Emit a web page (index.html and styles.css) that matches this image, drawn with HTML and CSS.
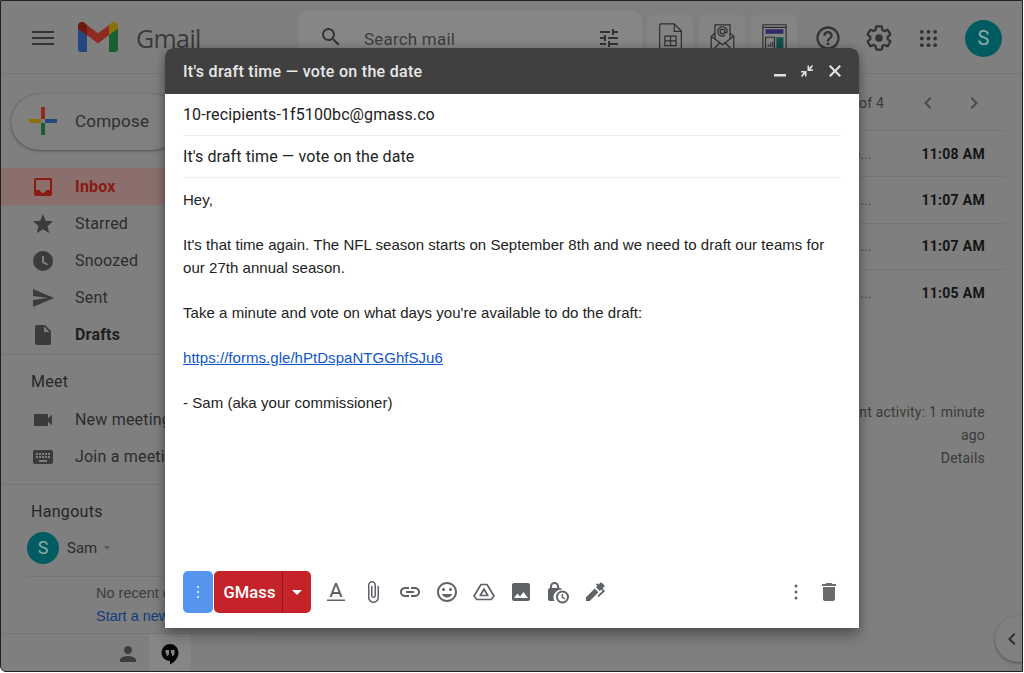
FILE: index.html
```html
<!DOCTYPE html>
<html lang="en">
<head>
<meta charset="utf-8">
<title>Gmail</title>
<link rel="stylesheet" href="styles.css">
</head>
<body>
<div class="app">
  <header class="topbar">
    <svg class="menu-icon" viewBox="0 0 22 14"><path d="M0 0h22v2H0zM0 6h22v2H0zM0 12h22v2H0z"/></svg>
    <svg class="logo" viewBox="0 0 40 30">
      <path fill="#24477f" d="M0 4v23a3 3 0 0 0 3 3h6V13z"/>
      <path fill="#1a5f30" d="M31 13v17h6a3 3 0 0 0 3-3V4z"/>
      <path fill="#8a7108" d="M31 3v10l9-6.500V4c0-3.500-3.500-5.500-6.500-3.300z"/>
      <path fill="#8f2a22" d="M9 13V3l11 8.300L31 3v10L20 21.500z"/>
      <path fill="#6e1a14" d="M0 4v3l9 6.500V3L6.500.7C3.500-1.500 0 .5 0 4z"/>
    </svg>
    <span class="brand">Gmail</span>
    <div class="search">
      <svg class="search-icon" viewBox="0 0 24 24"><path d="M15.500 14h-.79l-.28-.27A6.470 6.470 0 0 0 16 9.500 6.500 6.500 0 1 0 9.500 16c1.610 0 3.090-.59 4.230-1.570l.27.28v.79l5 4.990L20.490 19l-4.990-5zm-6 0C7.010 14 5 11.990 5 9.500S7.010 5 9.500 5 14 7.010 14 9.500 11.990 14 9.500 14z"/></svg>
      <span class="search-text">Search mail</span>
      <svg class="tune-icon" viewBox="0 0 24 24"><path d="M3 17v2h6v-2H3zM3 5v2h10V5H3zm10 16v-2h8v-2h-8v-2h-2v6h2zM7 9v2H3v2h4v2h2V9H7zm14 4v-2H11v2h10zm-6-4h2V7h4V5h-4V3h-2v6z"/></svg>
    </div>
    <div class="addons">
      <div class="addon"><svg viewBox="0 0 26 34"><path class="line" d="M1.500 2.500a1.500 1.500 0 0 1 1.500-1.500h14l7.500 7.500v22a1.500 1.500 0 0 1-1.500 1.500H3a1.500 1.500 0 0 1-1.500-1.500z"/><path class="line" d="M17 1v8h7.500M7 14h12v10H7zM7 19h12M13 14v10"/></svg></div>
      <div class="addon"><svg viewBox="0 0 26 34"><path class="line" d="M1 14l4-3M25 14l-4-3M1 14v17h24V14M5 17V2h16v15M1 14l12 9 12-9M1 31l9-10M25 31l-9-10"/><circle class="line" cx="13" cy="9" r="2.500"/><path class="line" d="M15.500 9c0 2 2.500 2 2.500 0a5 5 0 1 0-2 4"/></svg></div>
      <div class="addon"><svg viewBox="0 0 28 34"><path class="line" d="M1 1h26v32H1zM1 4h26"/><path fill="#2f2a66" d="M4 6h20v5H4z"/><path fill="#10504a" d="M16 15h8v14h-8z"/><path class="line" d="M4 15h10v14H4zM7 26v-3M9.500 26v-5M12 26v-6"/></svg></div>
    </div>
    <div class="top-actions">
      <svg class="top-icon" viewBox="0 0 24 24"><path d="M11 18h2v-2h-2v2zm1-16C6.480 2 2 6.480 2 12s4.480 10 10 10 10-4.480 10-10S17.520 2 12 2zm0 18c-4.410 0-8-3.590-8-8s3.590-8 8-8 8 3.590 8 8-3.590 8-8 8zm0-14c-2.210 0-4 1.790-4 4h2c0-1.100.9-2 2-2s2 .9 2 2c0 2-3 1.750-3 5h2c0-2.250 3-2.500 3-5 0-2.210-1.790-4-4-4z"/></svg>
      <svg class="top-icon" viewBox="0 0 24 24"><path class="gear" d="M19.430 12.980c.04-.32.07-.64.07-.98s-.03-.66-.07-.98l2.110-1.650c.19-.15.24-.42.12-.64l-2-3.460c-.12-.22-.39-.3-.61-.22l-2.490 1c-.52-.4-1.080-.73-1.690-.98l-.38-2.650A.488.488 0 0 0 14 2h-4c-.25 0-.46.18-.49.42l-.38 2.650c-.61.25-1.170.59-1.690.98l-2.490-1c-.23-.09-.49 0-.61.22l-2 3.460c-.13.22-.07.49.12.64l2.110 1.650c-.04.32-.07.65-.07.98s.03.66.07.98l-2.110 1.650c-.19.15-.24.42-.12.64l2 3.460c.12.22.39.3.61.22l2.490-1c.52.4 1.080.73 1.690.98l.38 2.650c.03.24.24.42.49.42h4c.25 0 .46-.18.49-.42l.38-2.650c.61-.25 1.170-.59 1.690-.98l2.490 1c.23.09.49 0 .61-.22l2-3.460c.12-.22.07-.49-.12-.64l-2.110-1.650z"/><circle cx="12" cy="12" r="3.200"/></svg>
      <svg class="grid-icon" viewBox="0 0 20 20"><circle cx="3" cy="3" r="2"/><circle cx="10" cy="3" r="2"/><circle cx="17" cy="3" r="2"/><circle cx="3" cy="10" r="2"/><circle cx="10" cy="10" r="2"/><circle cx="17" cy="10" r="2"/><circle cx="3" cy="17" r="2"/><circle cx="10" cy="17" r="2"/><circle cx="17" cy="17" r="2"/></svg>
      <span class="avatar avatar-large">S</span>
    </div>
  </header>

  <div class="columns">
    <aside class="sidebar">
      <div class="compose-btn">
        <svg class="plus" viewBox="0 0 28 28"><path fill="#8f2a22" d="M12 0h4v12h-4z"/><path fill="#24477f" d="M16 12h12v4H16z"/><path fill="#1a5f30" d="M12 16h4v12h-4z"/><path fill="#8a7108" d="M0 12h12v4H0z"/></svg>
        <span>Compose</span>
      </div>
      <nav class="nav">
        <div class="nav-item nav-active"><svg viewBox="0 0 24 24"><path d="M19 3H5c-1.100 0-2 .9-2 2v14c0 1.100.9 2 2 2h14c1.100 0 2-.9 2-2V5c0-1.100-.9-2-2-2zm0 12h-4c0 1.660-1.350 3-3 3s-3-1.340-3-3H4.990V5H19v10z"/></svg><span>Inbox</span></div>
        <div class="nav-item"><svg viewBox="0 0 24 24"><path d="M12 17.270L18.180 21l-1.640-7.030L22 9.240l-7.190-.61L12 2 9.190 8.630 2 9.240l5.460 4.730L5.820 21z"/></svg><span>Starred</span></div>
        <div class="nav-item"><svg viewBox="0 0 24 24"><path fill-rule="evenodd" d="M12 2a10 10 0 1 0 0 20 10 10 0 0 0 0-20zm-1 5h2v5.500l4 2.400-1 1.500-5-3z"/></svg><span>Snoozed</span></div>
        <div class="nav-item"><svg viewBox="0 0 24 24"><path d="M2.010 21L23 12 2.010 3 2 10l15 2-15 2z"/></svg><span>Sent</span></div>
        <div class="nav-item nav-bold"><svg viewBox="0 0 24 24"><path d="M6 2c-1.100 0-1.990.9-1.990 2L4 20c0 1.100.89 2 1.990 2H18c1.100 0 2-.9 2-2V8l-6-6H6zm7 7V3.500L18.500 9H13z"/></svg><span>Drafts</span></div>
      </nav>
      <section class="meet">
        <h2 class="side-title">Meet</h2>
        <div class="nav-item"><svg viewBox="0 0 24 24"><path d="M17 10.500V7c0-.55-.45-1-1-1H4c-.55 0-1 .45-1 1v10c0 .55.45 1 1 1h12c.55 0 1-.45 1-1v-3.500l4 4v-11l-4 4z"/></svg><span>New meeting</span></div>
        <div class="nav-item"><svg viewBox="0 0 24 24"><path d="M20 5H4c-1.100 0-1.990.9-1.990 2L2 17c0 1.100.9 2 2 2h16c1.100 0 2-.9 2-2V7c0-1.100-.9-2-2-2zm-9 3h2v2h-2V8zm0 3h2v2h-2v-2zM8 8h2v2H8V8zm0 3h2v2H8v-2zm-1 2H5v-2h2v2zm0-3H5V8h2v2zm9 7H8v-2h8v2zm0-4h-2v-2h2v2zm0-3h-2V8h2v2zm3 3h-2v-2h2v2zm0-3h-2V8h2v2z"/></svg><span>Join a meeting</span></div>
      </section>
      <section class="hangouts">
        <h2 class="side-title">Hangouts</h2>
        <div class="hang-user"><span class="avatar avatar-small">S</span><span>Sam</span><i class="caret"></i></div>
        <div class="hang-empty">
          <div>No recent chats</div>
          <div class="hang-link">Start a new one</div>
        </div>
      </section>
      <div class="hang-tabs">
        <div class="hang-tab"><svg viewBox="0 0 24 24"><path d="M12 12c2.210 0 4-1.790 4-4s-1.790-4-4-4-4 1.790-4 4 1.790 4 4 4zm0 2c-2.670 0-8 1.340-8 4v2h16v-2c0-2.660-5.330-4-8-4z"/></svg></div>
        <div class="hang-tab hang-tab-on"><svg viewBox="0 0 24 24"><path fill-rule="evenodd" d="M12 2a8.500 8.500 0 0 0-8.500 8.500c0 4.700 3.800 8.500 8.500 8.500v3.500c4.500-2.200 8.500-6.500 8.500-12A8.500 8.500 0 0 0 12 2zM7.500 8H11v3.500c0 1.500-1 2.500-2.500 2.500v-2.500h-1zm5.500 0h3.500v3.500c0 1.500-1 2.500-2.500 2.500v-2.500h-1z"/></svg></div>
      </div>
    </aside>

    <main class="main">
      <div class="pager">
        <span>1–4 of 4</span>
        <svg viewBox="0 0 24 24"><path d="M15.410 7.410L14 6l-6 6 6 6 1.410-1.410L10.830 12z"/></svg>
        <svg viewBox="0 0 24 24"><path d="M8.590 16.590L10 18l6-6-6-6-1.410 1.410L13.170 12z"/></svg>
      </div>
      <div class="row"><span class="snip">o...</span><span class="time">11:08 AM</span></div>
      <div class="row"><span class="snip">...</span><span class="time">11:07 AM</span></div>
      <div class="row"><span class="snip">...</span><span class="time">11:07 AM</span></div>
      <div class="row"><span class="snip">...</span><span class="time">11:05 AM</span></div>
      <div class="activity">
        <div>Last account activity: 1 minute</div>
        <div>ago</div>
        <div>Details</div>
      </div>
    </main>
  </div>

  <div class="panel-toggle"><svg viewBox="0 0 24 24"><path d="M15.410 7.410L14 6l-6 6 6 6 1.410-1.410L10.830 12z"/></svg></div>

  <section class="compose">
    <div class="compose-head">
      <span class="compose-title">It's draft time — vote on the date</span>
      <svg class="head-icon" viewBox="0 0 16 16"><path d="M2 11h12v2.500H2z"/></svg>
      <svg class="head-icon" viewBox="0 0 16 16"><path d="M14 3l-1-1-3 3V2.500H8.500V8H14V6.500h-2.500zM2 13l1 1 3-3v2.500h1.500V8H2v1.500h2.500z"/></svg>
      <svg class="head-icon" viewBox="0 0 14 14"><path d="M14 1.800L12.200 0 7 5.200 1.800 0 0 1.800 5.200 7 0 12.200 1.800 14 7 8.800 12.200 14 14 12.200 8.800 7z"/></svg>
    </div>
    <div class="compose-body">
      <div class="field">10-recipients-1f5100bc@gmass.co</div>
      <div class="field">It's draft time — vote on the date</div>
      <div class="message">
        <p>Hey,</p>
        <p>It's that time again. The NFL season starts on September 8th and we need to draft our teams for our 27th annual season.</p>
        <p>Take a minute and vote on what days you're available to do the draft:</p>
        <p><a class="msg-link" href="#">https://forms.gle/hPtDspaNTGGhfSJu6</a></p>
        <p>- Sam (aka your commissioner)</p>
      </div>
      <div class="toolbar">
        <div class="btn-dots"><svg viewBox="0 0 4 14"><circle cx="2" cy="2" r="1"/><circle cx="2" cy="7" r="1"/><circle cx="2" cy="12" r="1"/></svg></div>
        <div class="btn-gmass"><span class="gmass-label">GMass</span><span class="gmass-drop"><i></i></span></div>
        <div class="tools">
          <svg viewBox="0 0 24 24"><path d="M11 3L5.500 17h2.250l1.120-3h6.250l1.120 3h2.250L13 3h-2zm-1.380 9L12 5.670 14.380 12H9.620zM3 19.500h18V21H3z"/></svg>
          <svg viewBox="0 0 24 24"><path d="M16.500 6v11.500c0 2.210-1.790 4-4 4s-4-1.790-4-4V5c0-1.380 1.120-2.500 2.500-2.500s2.500 1.120 2.500 2.500v10.500c0 .55-.45 1-1 1s-1-.45-1-1V6H10v9.500c0 1.380 1.120 2.500 2.500 2.500s2.500-1.120 2.500-2.500V5c0-2.210-1.790-4-4-4S7 2.790 7 5v12.500c0 3.040 2.460 5.500 5.500 5.500s5.500-2.460 5.500-5.500V6h-1.500z"/></svg>
          <svg viewBox="0 0 24 24"><path d="M3.900 12c0-1.710 1.390-3.100 3.100-3.100h4V7H7c-2.760 0-5 2.240-5 5s2.240 5 5 5h4v-1.900H7c-1.710 0-3.100-1.390-3.100-3.100zM8 13h8v-2H8v2zm9-6h-4v1.900h4c1.710 0 3.100 1.390 3.100 3.100s-1.390 3.100-3.100 3.100h-4V17h4c2.760 0 5-2.240 5-5s-2.240-5-5-5z"/></svg>
          <svg viewBox="0 0 24 24"><path d="M11.990 2C6.470 2 2 6.480 2 12s4.470 10 9.990 10C17.520 22 22 17.520 22 12S17.520 2 11.990 2zM12 20c-4.420 0-8-3.580-8-8s3.580-8 8-8 8 3.580 8 8-3.580 8-8 8zm3.500-9c.83 0 1.500-.67 1.500-1.500S16.330 8 15.500 8 14 8.670 14 9.500s.67 1.500 1.500 1.500zm-7 0c.83 0 1.500-.67 1.500-1.500S9.330 8 8.500 8 7 8.670 7 9.500 7.670 11 8.500 11zm3.500 6.500c2.330 0 4.310-1.460 5.110-3.500H6.890c.8 2.040 2.780 3.500 5.110 3.500z"/></svg>
          <svg viewBox="0 0 24 24"><path fill="none" stroke-width="1.700" stroke-linejoin="round" class="stroke" d="M9 4.500h6l7 11.500-3 3.500H5L2 16zM12 9l-3.800 6.500h7.600z"/></svg>
          <svg viewBox="0 0 24 24"><path d="M21 19V5c0-1.100-.9-2-2-2H5c-1.100 0-2 .9-2 2v14c0 1.100.9 2 2 2h14c1.100 0 2-.9 2-2zM8.500 13.500l2.500 3.010L14.500 12l4.500 6H5l3.500-4.500z"/></svg>
          <svg viewBox="0 0 24 24"><path d="M4 8V6.500a4.500 4.500 0 0 1 9 0V8h1a2 2 0 0 1 2 1.500c-4.500 0-8.500 3.500-8.500 8 0 1.200.3 2.500 1 3.500H4a2 2 0 0 1-2-2v-9a2 2 0 0 1 2-2zm2 0h5V6.500a2.500 2.500 0 0 0-5 0z"/><path fill-rule="evenodd" d="M16.500 10.500a6.500 6.500 0 1 0 0 13 6.500 6.500 0 0 0 0-13zm0 2a4.500 4.500 0 1 1 0 9 4.500 4.500 0 0 1 0-9zM15.700 14v3.800l3 1.800.8-1.200-2.400-1.400V14z"/></svg>
          <svg viewBox="0 0 24 24"><path d="M3 17.250V21h3.750L15.500 12.250l-3.750-3.750zM13 7.250l3.750 3.750 1.500-1.500 1.250 1.250-5 5 1.250 1.250L22 11l-2.500-2.500 1.800-1.800a1 1 0 0 0 0-1.400l-2.600-2.600a1 1 0 0 0-1.400 0l-1.800 1.800-1.250-1.250-1.250 1.250 1.250 1.250z"/></svg>
        </div>
        <svg class="tool-more" viewBox="0 0 4 16"><circle cx="2" cy="2" r="1.500"/><circle cx="2" cy="8" r="1.500"/><circle cx="2" cy="14" r="1.500"/></svg>
        <svg class="tool-trash" viewBox="0 0 24 24"><path d="M6 19c0 1.100.9 2 2 2h8c1.100 0 2-.9 2-2V7H6v12zM19 4h-3.500l-1-1h-5l-1 1H5v2h14V4z"/></svg>
      </div>
    </div>
  </section>
</div>
</body>
</html>
```

FILE: styles.css
```css
* { box-sizing: border-box; }
html, body { margin: 0; padding: 0; background: #fff; }
.app {
  position: relative;
  width: 1023px;
  height: 672px;
  background: #7f7f7f;
  border: 1px solid #222;
  border-bottom-left-radius: 6px;
  overflow: hidden;
  display: flex;
  flex-direction: column;
  font-family: Roboto, "Liberation Sans", sans-serif;
  color: #2b2b2b;
}

/* Top bar */
.topbar {
  height: 73px;
  flex: none;
  display: flex;
  align-items: center;
  border-bottom: 1px solid #767676;
  padding: 2px 0 0 31px;
}
.menu-icon { width: 22px; height: 14px; fill: #333; flex: none; }
.logo { width: 40px; height: 30px; margin: -2px 0 0 24px; flex: none; }
.brand { font-family: "Open Sans", Roboto, sans-serif; font-size: 25px; color: #3a3a3a; margin-left: 18px; width: 163px; flex: none; letter-spacing: -.6px; }
.search {
  width: 343px;
  height: 56px;
  flex: none;
  background: #868686;
  border-radius: 10px;
  display: flex;
  align-items: center;
  padding-left: 20px;
}
.search-icon { width: 24px; height: 24px; fill: #333; flex: none; margin-top: -3px; }
.search-text { font-size: 17px; color: #3c3c3c; margin: 2px 0 0 21px; flex: 1; letter-spacing: .2px; }
.tune-icon { width: 24px; height: 24px; fill: #333; margin-right: 21px; flex: none; }
.addons { display: flex; gap: 6px; margin-left: 5px; flex: none; }
.addon {
  width: 46px;
  height: 46px;
  background: #848484;
  border-radius: 6px;
  display: flex;
  align-items: flex-start;
  justify-content: center;
  padding-top: 8px;
}
.addon svg { width: 25px; height: 32px; }
.line { fill: none; stroke: #2e2e2e; stroke-width: 1.300; }
.top-actions { display: flex; align-items: center; margin-left: 17px; flex: none; }
.top-icon { width: 28px; height: 28px; fill: #333; margin-right: 23px; flex: none; }
.gear { fill: none; stroke: #333; stroke-width: 1.900; }
.grid-icon { width: 19px; height: 19px; fill: #333; margin-left: 3px; flex: none; }
.avatar {
  display: flex;
  align-items: center;
  justify-content: center;
  border-radius: 50%;
  background: #005c60;
  color: #8fa9aa;
  flex: none;
}
.avatar-large { width: 37px; height: 37px; font-size: 20px; margin-left: 27px; }
.avatar-small { width: 32px; height: 32px; font-size: 18px; }

/* Columns */
.columns { flex: 1; display: flex; min-height: 0; }
.sidebar { width: 256px; flex: none; display: flex; flex-direction: column; position: relative; }
.compose-btn {
  margin: 20px 0 0 10px;
  width: 170px;
  height: 56px;
  border-radius: 28px;
  background: #808080;
  box-shadow: 0 1px 3px rgba(0,0,0,.35), 0 0 1px rgba(0,0,0,.3);
  display: flex;
  align-items: center;
  padding: 0 0 2px 18px;
  font-size: 17px;
  letter-spacing: .2px;
  color: #2e2e2e;
  flex: none;
}
.plus { width: 28px; height: 28px; margin-right: 18px; flex: none; }
.nav { margin-top: 18px; border-bottom: 1px solid #767676; padding-bottom: 1px; flex: none; }
.nav-item {
  height: 37px;
  display: flex;
  align-items: center;
  padding-left: 30px;
  font-size: 16px;
  letter-spacing: .2px;
  color: #2c2c2c;
  white-space: nowrap;
  flex: none;
}
.nav-item svg { width: 24px; height: 24px; fill: #3b3b3b; margin-right: 20px; flex: none; }
.nav-active { background: #8a6f6d; color: #8a1a14; font-weight: 700; }
.nav-active svg { fill: #8a1a14; }
.nav-bold { font-weight: 700; color: #1e1e1e; }
.side-title { font-size: 16px; font-weight: 400; letter-spacing: .3px; color: #262626; margin: 0; padding-left: 30px; }
.meet { height: 130px; padding-top: 17px; border-bottom: 1px solid #767676; flex: none; }
.meet .side-title { height: 29px; }
.hangouts { flex: 1; padding-top: 17px; }
.hangouts .side-title { height: 29px; }
.hang-user {
  height: 46px;
  margin-left: 26px;
  display: flex;
  align-items: center;
  gap: 7px;
  font-size: 15px;
  border-bottom: 1px solid #767676;
  padding-bottom: 13px;
  padding-top: 1px;
}
.hang-user span:nth-child(2) { margin-left: 1px; }
.caret { width: 0; height: 0; border: 3.500px solid transparent; border-top: 4px solid #5a5a5a; border-bottom: 0; }
.hang-empty { padding: 5px 0 0 95px; font-family: "Liberation Sans", sans-serif; font-size: 14.500px; line-height: 23px; color: #3c3c3c; white-space: nowrap; }
.hang-link { color: #123a80; }
.hang-tabs {
  height: 38px;
  flex: none;
  border-top: 1px solid #767676;
  display: flex;
  justify-content: flex-start;
  padding-left: 106px;
}
.hang-tab { width: 42px; display: flex; align-items: center; justify-content: center; padding-top: 2px; }
.hang-tab svg { width: 24px; height: 24px; fill: #3d3d3d; }
.hang-tab-on { background: #868686; }
.hang-tab-on svg { fill: #050505; }

/* Main list */
.main { flex: 1; padding-right: 17px; min-width: 0; }
.pager {
  height: 56px;
  display: flex;
  align-items: center;
  justify-content: flex-end;
  font-size: 14px;
  color: #3a3a3a;
  letter-spacing: .2px;
  padding: 2px 19px 0 0;
}
.pager span { margin-right: 32px; }
.pager svg { width: 24px; height: 24px; fill: #4a4a4a; margin-right: 22px; }
.pager svg:last-child { margin-right: 0; }
.row {
  height: 46.300px;
  border-top: 1px solid #767676;
  display: flex;
  align-items: center;
  font-size: 14px;
  padding-right: 20px;
}
.snip { margin-left: auto; margin-right: 50px; color: #4a4a4a; }
.time { font-weight: 700; color: #141414; letter-spacing: .3px; }
.row:last-of-type { border-bottom: 1px solid #767676; }
.activity { margin-top: 86px; padding-right: 20px; text-align: right; font-size: 14px; line-height: 23px; letter-spacing: .2px; color: #3a3a3a; }

.panel-toggle {
  position: absolute;
  left: 994px;
  top: 615px;
  width: 46px;
  height: 46px;
  border-radius: 50%;
  background: #808080;
  box-shadow: 0 1px 3px rgba(0,0,0,.4);
  display: flex;
  align-items: center;
  padding-left: 5px;
}
.panel-toggle svg { width: 24px; height: 24px; fill: #2e2e2e; }

/* Compose dialog */
.compose {
  position: absolute;
  left: 164px;
  top: 47px;
  width: 694px;
  height: 580px;
  background: #fff;
  border-radius: 8px 8px 0 0;
  box-shadow: 0 8px 14px rgba(0,0,0,.3), 0 0 8px rgba(0,0,0,.2);
  display: flex;
  flex-direction: column;
}
.compose-head {
  height: 46px;
  flex: none;
  background: #404040;
  border-radius: 8px 8px 0 0;
  display: flex;
  align-items: center;
  padding: 0 18px;
  color: #e8e8e8;
}
.compose-title { flex: 1; font-size: 16px; font-weight: 500; letter-spacing: .3px; }
.head-icon { width: 16px; height: 16px; fill: #e0e0e0; margin-left: 11px; flex: none; }
.head-icon:last-child { width: 12px; height: 12px; margin-left: 14px; }
.compose-body { flex: 1; padding: 0 18px; display: flex; flex-direction: column; min-height: 0; }
.field {
  height: 42px;
  flex: none;
  border-bottom: 1px solid #eee;
  display: flex;
  align-items: center;
  font-size: 16px;
  color: #222;
  letter-spacing: .1px;
}
.message { flex: 1; padding-top: 11px; font-family: "Liberation Sans", Arial, sans-serif; font-size: 15px; letter-spacing: .04px; line-height: 22.500px; color: #222; }
.message p { margin: 0 0 22.500px; }
.msg-link { color: #1155cc; }
.toolbar { height: 72px; flex: none; display: flex; align-items: center; }
.btn-dots {
  width: 30px;
  height: 42px;
  background: #5595ee;
  border-radius: 5px;
  display: flex;
  align-items: center;
  justify-content: center;
  flex: none;
}
.btn-dots svg { width: 4px; height: 14px; fill: #fff; }
.btn-gmass {
  width: 97px;
  height: 42px;
  margin-left: 1px;
  background: #c5232a;
  border-radius: 5px;
  display: flex;
  flex: none;
  color: #fff;
}
.gmass-label { width: 68px; padding-left: 3px; display: flex; align-items: center; justify-content: center; font-size: 16.500px; font-weight: 500; letter-spacing: .1px; }
.gmass-drop { flex: 1; border-left: 1px solid #8f1a1e; display: flex; align-items: center; justify-content: center; }
.gmass-drop i { width: 0; height: 0; border: 5px solid transparent; border-top: 5px solid #fff; border-bottom: 0; }
.tools { display: flex; gap: 13px; margin-left: 13px; flex: 1; }
.tools svg { width: 24px; height: 24px; fill: #5f6368; flex: none; }
.tools .stroke { stroke: #5f6368; }
.tool-more { width: 4px; height: 16px; fill: #5f6368; margin-right: 19px; flex: none; }
.tool-trash { width: 24px; height: 24px; fill: #6b6b6b; flex: none; }
```
